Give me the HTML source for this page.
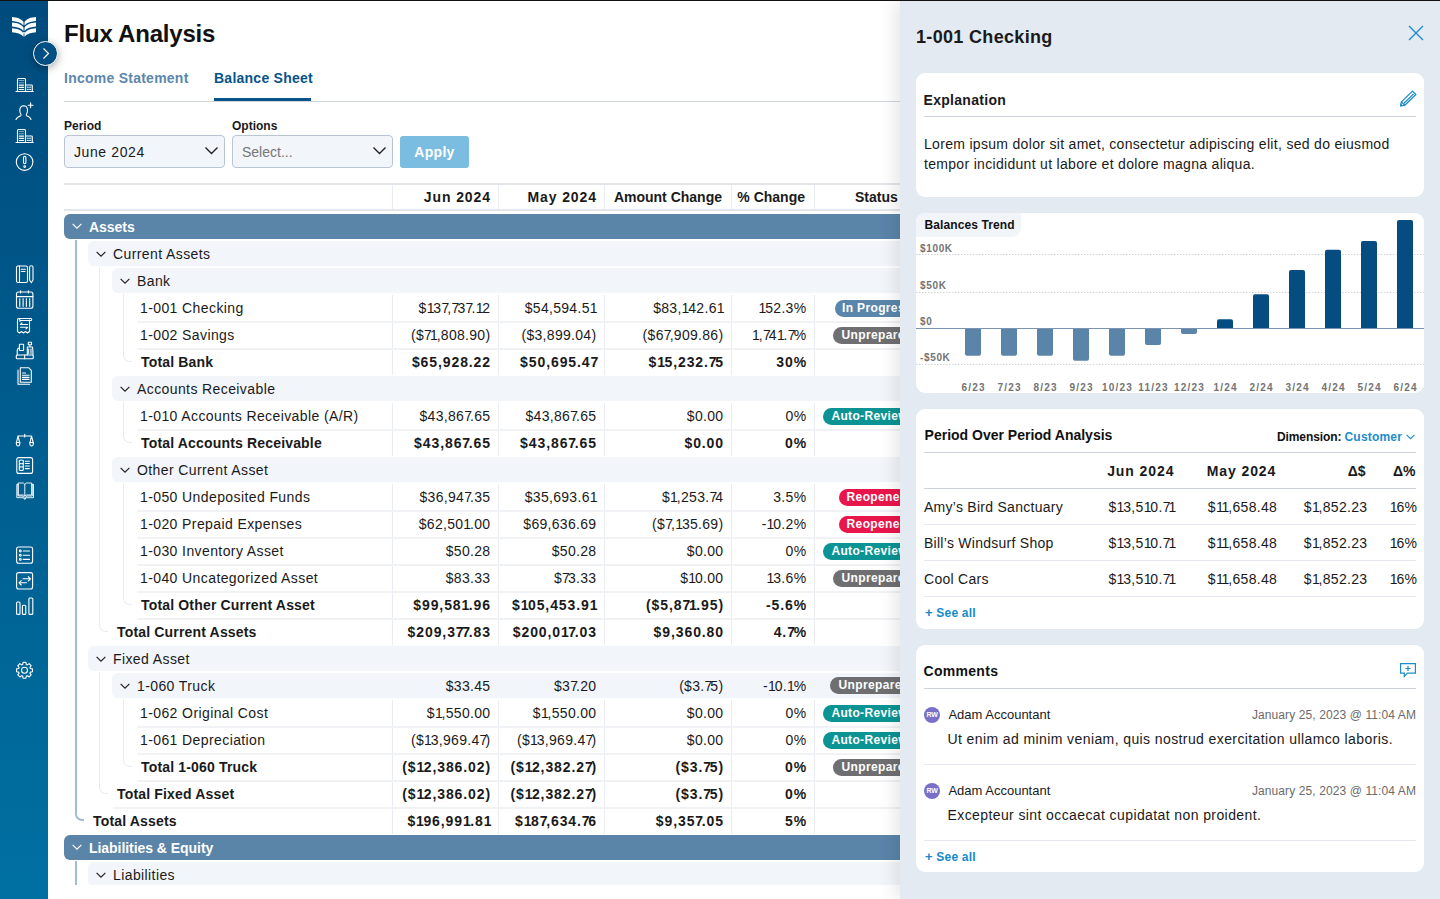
<!DOCTYPE html>
<html><head><meta charset="utf-8">
<style>
*{box-sizing:border-box;margin:0;padding:0}
html,body{width:1440px;height:899px;overflow:hidden;background:#fff;font-family:"Liberation Sans",sans-serif;color:#1a1a1a}
.abs{position:absolute}
#topline{position:absolute;left:0;top:0;width:1440px;height:1px;background:#111;z-index:50}
#side{position:absolute;left:0;top:1px;width:47.5px;height:898px;background:linear-gradient(#004b7d,#0070a2);z-index:5}
#side svg{position:absolute;left:14px;width:20px;height:20px;overflow:visible}
#collapse{position:absolute;left:33px;top:41px;width:25px;height:25px;border-radius:50%;background:#004f82;border:1px solid #fff;box-shadow:0 2px 8px rgba(0,0,0,.35);z-index:6}
h1{position:absolute;left:64px;top:20px;font-size:24px;font-weight:bold;color:#111;letter-spacing:-0.2px}
.tab{position:absolute;top:70px;font-size:14px;font-weight:bold;letter-spacing:0.25px}
#tabline{position:absolute;left:64px;top:101px;width:836px;height:1px;background:#cfd5dd}
#tabul{position:absolute;left:214px;top:98px;width:97px;height:3px;background:#08548a}
.lbl{position:absolute;top:119px;font-size:12px;font-weight:bold;color:#1a1a1a}
.sel{position:absolute;top:135px;width:161px;height:33px;border:1px solid #b9c5d3;border-radius:4px;background:#f2f5fa;font-size:14px;line-height:33px;padding-left:9px}
.sel svg{position:absolute;right:6px;top:11px}
#apply{position:absolute;left:400px;top:135.5px;width:69px;height:32px;border-radius:3px;background:#7bbde0;color:#fff;font-size:14px;font-weight:bold;line-height:33px;letter-spacing:0.3px;text-align:center}
/* table */
#tbl{position:absolute;left:0;top:0;width:900px;height:899px;overflow:hidden}
.hl{position:absolute;height:2px;background:#e6eaf0}
.vl{position:absolute;width:1px;background:#e8ecf2}
.row{position:absolute;height:27px;font-size:14px;line-height:27px;white-space:nowrap}
.grp{position:absolute;height:25px;background:#f2f5fa;border-radius:6px 0 0 6px}
.num{position:absolute;text-align:right;font-size:14px;white-space:nowrap}
.b{font-weight:bold}
.lb{letter-spacing:0.4px}.lb.b{letter-spacing:0.17px}.nm{letter-spacing:0.3px}.nm.b{letter-spacing:0.9px}
i{font-style:normal}.nm .d1{letter-spacing:-1.1px}.nm .d7{letter-spacing:-1.9px}.nm.b .d1{letter-spacing:-0.5px}.nm.b .d7{letter-spacing:-1.3px}
#panel .d1{letter-spacing:-1.1px}#panel .d7{letter-spacing:-1.9px}
.badge{position:absolute;height:17px;border-radius:9px;color:#fff;font-size:12px;font-weight:bold;line-height:17px;text-align:center;white-space:nowrap;letter-spacing:0.35px}
/* panel */
#panel{position:absolute;left:900px;top:1px;width:540px;height:898px;background:#e3eaf2;box-shadow:-6px 0 15px rgba(0,0,0,.09);z-index:10}
.card{position:absolute;left:16px;width:508px;background:#fff;border-radius:9px}
.ct{position:absolute;left:8px;font-size:14px;font-weight:bold;color:#111}
.cdiv{position:absolute;left:8px;width:492px;height:1px;background:#cdd1da}
.ldiv{position:absolute;left:8px;width:492px;height:1px;background:#e6eaf0}
.seeall{position:absolute;left:9px;font-size:12px;font-weight:bold;color:#1c8ccc}
</style></head><body>
<div id="topline"></div>
<div id="side"></div>
<!--SIDE--><svg class="abs" style="left:0;top:0;z-index:6" width="48" height="899" viewBox="0 0 48 899"><g fill="none" stroke="#fff" stroke-width="1.1" stroke-linecap="round" stroke-linejoin="round">
</g><g fill="#fff">
<path d="M12 17.0 C17 17.3 21 18.5 23.5 22.0 V25.5 C21 22.3 17 21.3 12 21.0 Z"/>
<path d="M36 17.0 C31 17.3 27 18.5 24.5 22.0 V25.5 C27 22.3 31 21.3 36 21.0 Z"/>
<path d="M12 22.6 C17 22.9 21 24.1 23.5 27.6 V31.1 C21 27.9 17 26.9 12 26.6 Z"/>
<path d="M36 22.6 C31 22.9 27 24.1 24.5 27.6 V31.1 C27 27.9 31 26.9 36 26.6 Z"/>
<path d="M12 28.2 C17 28.5 21 29.7 23.5 33.2 V36.7 C21 33.5 17 32.5 12 32.2 Z"/>
<path d="M36 28.2 C31 28.5 27 29.7 24.5 33.2 V36.7 C27 33.5 31 32.5 36 32.2 Z"/>
<path d="M23.2 32 L24 36 L24.8 32 Z"/>
</g><g fill="none" stroke="#fff" stroke-width="1.1" stroke-linecap="round" stroke-linejoin="round">
<path d="M17.5 91.5 V79.5 Q17.5 78.5 18.5 78.5 H24.5 Q25.5 78.5 25.5 79.5 V91.5 M25.5 85.0 H31.5 Q32.3 85.0 32.3 85.8 V91.5 M16 91.5 H33.3"/>
<path d="M19.3 80.5 H23.6" stroke-opacity="0.5"/>
<path d="M19.3 82.8 H23.6" stroke-opacity="0.5"/>
<path d="M19.3 85.1 H23.6" stroke-opacity="1"/>
<path d="M19.3 87.4 H23.6" stroke-opacity="1"/>
<path d="M19.3 89.5 H23.6" stroke-opacity="1"/>
<path d="M27.2 87.2 H28.4 M29.6 87.2 H30.8 M27.2 89.4 H28.4 M29.6 89.4 H30.8" stroke-width="1"/>
<path d="M17.5 142.5 V130.5 Q17.5 129.5 18.5 129.5 H24.5 Q25.5 129.5 25.5 130.5 V142.5 M25.5 136.0 H31.5 Q32.3 136.0 32.3 136.8 V142.5 M16 142.5 H33.3"/>
<path d="M19.3 131.5 H23.6" stroke-opacity="0.5"/>
<path d="M19.3 133.8 H23.6" stroke-opacity="0.5"/>
<path d="M19.3 136.1 H23.6" stroke-opacity="1"/>
<path d="M19.3 138.4 H23.6" stroke-opacity="1"/>
<path d="M19.3 140.5 H23.6" stroke-opacity="1"/>
<path d="M27.2 138.2 H28.4 M29.6 138.2 H30.8 M27.2 140.4 H28.4 M29.6 140.4 H30.8" stroke-width="1"/>
<path d="M16 119.5 Q17 116.8 20.8 115.7 Q21.3 115.2 20.8 114.2 Q19.6 112.5 19.8 109.5 Q20.3 105.8 23.7 105.7 Q27.2 105.8 27.5 109.5 Q27.8 112.5 26.5 114.2 Q26 115.2 26.6 115.7 Q30.3 116.8 31 119.5"/>
<path d="M30.6 102.8 V107.6 M28.2 105.2 H33"/>
<circle cx="24.6" cy="162.1" r="8.3"/>
<rect x="23.5" y="156.4" width="2.4" height="7.2" rx="1.2"/>
<circle cx="24.7" cy="166.6" r="0.9"/>
<rect x="16.5" y="266" width="11" height="16.5" rx="1.5"/>
<path d="M19.5 266 V282.5 M21.3 269.3 H25.5 M21.3 271.5 H25"/>
<path d="M29.6 267 Q29.6 265.7 31.3 265.7 Q33 265.7 33 267 V280 L31.3 282.8 L29.6 280 Z"/>
<rect x="16.5" y="292" width="16.4" height="16.2" rx="2"/>
<path d="M16.5 296.6 H32.9 M20.6 290.8 V293 M28.4 290.8 V293"/>
<path d="M19.8 298.8 V306.3" stroke-dasharray="1.2 1" stroke-width="1.2"/>
<path d="M23.1 298.8 V306.3" stroke-dasharray="1.2 1" stroke-width="1.2"/>
<path d="M26.4 298.8 V306.3" stroke-dasharray="1.2 1" stroke-width="1.2"/>
<path d="M29.7 298.8 V306.3" stroke-dasharray="1.2 1" stroke-width="1.2"/>
<path d="M18.5 318.5 Q17.5 318.5 17.5 319.8 V331.5 L19.5 333 L21.5 331.5 L23.5 333 L25.5 331.5 L27.5 333 L29.5 331.5 V320 M18.5 318.5 H31 Q31.7 318.5 31.7 319.5 Q31.7 320.5 30.7 320.5 H20 M18.5 318.5 Q20 318.8 20 320.5 V321.5"/>
<path d="M20.5 324.5 H27.5 M20.5 324.5 L22 323 M20.5 327.3 H27.5 M27.5 327.3 L26 328.8"/>
<rect x="16.3" y="355" width="17" height="3.7" rx="1"/>
<path d="M24.7 355 V358.7 M17.2 355 V351 Q17.2 348.3 19.5 348 M28.3 342.3 H31.5 V344.8 H28.3 Z M29.9 344.8 V347 M27.3 347 H32.5 Q33 350 33 355 M27.3 347 V355"/>
<rect x="19.4" y="344.2" width="4.2" height="6.3" rx="0.5"/>
<path d="M28.7 349 V353.5 M31 349 V353.5" stroke-dasharray="1 0.8"/>
<path d="M18 370 V384.3 H29.6"/>
<path d="M20.3 367.8 H28.8 L31.3 370.3 V382.3 H20.3 Z"/>
<path d="M22.5 373 H25.5 M22.5 375.3 H29 M22.5 377.4 H29 M22.5 379.4 H29"/>
<path d="M24.7 434.2 V437 M17.9 436 H31.5 M17.9 436 L16.5 442.5 M17.9 436 L19.7 442.5 M31.5 436 L30 442.5 M31.5 436 L33.2 442.5"/>
<path d="M16.3 442.5 H19.9 Q19.9 446 18.1 446 Q16.3 446 16.3 442.5 Z M29.8 442.5 H33.4 Q33.4 446 31.6 446 Q29.8 446 29.8 442.5 Z"/>
<rect x="16.8" y="457.6" width="15.8" height="15.8" rx="2"/>
<path d="M19.3 460.5 Q21.3 459.5 23.3 460.5 V470 Q21.3 471 19.3 470 Z M19.3 463.3 Q21.3 464.3 23.3 463.3 M19.3 466.5 Q21.3 467.5 23.3 466.5"/>
<path d="M25.3 461.3 H29.3 M25.3 463.5 H29.3 M25.3 466 H29.3 M25.3 468.6 H29.3"/>
<path d="M18 484.3 V496 H23 L24.8 498.8 L26.6 496 H32.3 V484.3 M18 484.3 H16.8 V497.7 H23.2 L24.8 499.5 L26.4 497.7 H33.5 V484.3 H32.3 M18.6 483 H23.3 L24.8 484.3 L26.3 483 H31.6 V495 H26.3 L24.8 496 L23.3 495 H18.6 Z M24.8 484.3 V496" stroke-width="0.9"/>
<rect x="16.6" y="547" width="16" height="16.2" rx="2"/>
<circle cx="20.3" cy="551" r="0.9"/><circle cx="20.3" cy="555.2" r="0.9"/><circle cx="20.3" cy="559.4" r="0.9"/>
<path d="M23.2 551 H29.5 M23.2 555.2 H29.5 M23.2 559.4 H29.5"/>
<rect x="16.6" y="572.6" width="16" height="16.4" rx="2"/>
<path d="M23 578.8 H30.5 L28.3 576.6 M30.5 578.8 L28.3 581 M26.5 582.8 H19 L21.2 580.6 M19 582.8 L21.2 585"/>
<rect x="16.6" y="602" width="3.4" height="12.4" rx="1"/><rect x="22.4" y="605.3" width="3.4" height="9.1" rx="1"/><rect x="28.9" y="598" width="3.9" height="16.4" rx="1"/>
<path d="M30.33 668.50 L32.47 668.85 L32.47 671.75 L30.33 672.10 L29.90 673.15 L31.16 674.91 L29.11 676.96 L27.35 675.70 L26.30 676.13 L25.95 678.27 L23.05 678.27 L22.70 676.13 L21.65 675.70 L19.89 676.96 L17.84 674.91 L19.10 673.15 L18.67 672.10 L16.53 671.75 L16.53 668.85 L18.67 668.50 L19.10 667.45 L17.84 665.69 L19.89 663.64 L21.65 664.90 L22.70 664.47 L23.05 662.33 L25.95 662.33 L26.30 664.47 L27.35 664.90 L29.11 663.64 L31.16 665.69 L29.90 667.45 Z"/>
<circle cx="24.5" cy="670.3" r="3"/>
</g></svg><!--/SIDE-->
<div id="collapse"><svg width="25" height="25" viewBox="0 0 25 25" style="position:absolute;left:-1px;top:-1px"><path d="M10.5 7.5 L15.5 12.5 L10.5 17.5" fill="none" stroke="#fff" stroke-width="1.2"/></svg></div>

<div id="tbl">
<h1>Flux Analysis</h1>
<div class="tab" style="left:64px;color:#5d87ad">Income Statement</div>
<div class="tab" style="left:214px;color:#08548a">Balance Sheet</div>
<div id="tabline"></div>
<div id="tabul"></div>
<div class="lbl" style="left:64px">Period</div>
<div class="lbl" style="left:232px">Options</div>
<div class="sel" style="left:64px"><span style="letter-spacing:0.6px">June 2024</span><svg width="13" height="8" viewBox="0 0 13 8"><path d="M0.5 0.5 L6.5 6.5 L12.5 0.5" fill="none" stroke="#222" stroke-width="1.4"/></svg></div>
<div class="sel" style="left:232px;color:#777">Select...<svg width="13" height="8" viewBox="0 0 13 8"><path d="M0.5 0.5 L6.5 6.5 L12.5 0.5" fill="none" stroke="#222" stroke-width="1.4"/></svg></div>
<div id="apply">Apply</div>
<!--TABLE--><div class="abs" style="left:0;top:0;width:900px;height:885px;overflow:hidden">
<div class="abs" style="left:64px;top:183px;width:836px;height:2px;background:#e2e5e9"></div>
<div class="abs" style="left:64px;top:209px;width:836px;height:2px;background:#e2e5e9"></div>
<div class="abs" style="left:391.5px;top:185px;width:1px;height:24px;background:#e9edf3"></div>
<div class="abs" style="left:497.5px;top:185px;width:1px;height:24px;background:#e9edf3"></div>
<div class="abs" style="left:603.5px;top:185px;width:1px;height:24px;background:#e9edf3"></div>
<div class="abs" style="left:731px;top:185px;width:1px;height:24px;background:#e9edf3"></div>
<div class="abs" style="left:814px;top:185px;width:1px;height:24px;background:#e9edf3"></div>
<div class="abs" style="left:391.5px;top:295.4px;width:1px;height:79.6px;background:#e9edf3"></div>
<div class="abs" style="left:497.5px;top:295.4px;width:1px;height:79.6px;background:#e9edf3"></div>
<div class="abs" style="left:603.5px;top:295.4px;width:1px;height:79.6px;background:#e9edf3"></div>
<div class="abs" style="left:731px;top:295.4px;width:1px;height:79.6px;background:#e9edf3"></div>
<div class="abs" style="left:814px;top:295.4px;width:1px;height:79.6px;background:#e9edf3"></div>
<div class="abs" style="left:391.5px;top:403.4px;width:1px;height:52.6px;background:#e9edf3"></div>
<div class="abs" style="left:497.5px;top:403.4px;width:1px;height:52.6px;background:#e9edf3"></div>
<div class="abs" style="left:603.5px;top:403.4px;width:1px;height:52.6px;background:#e9edf3"></div>
<div class="abs" style="left:731px;top:403.4px;width:1px;height:52.6px;background:#e9edf3"></div>
<div class="abs" style="left:814px;top:403.4px;width:1px;height:52.6px;background:#e9edf3"></div>
<div class="abs" style="left:391.5px;top:484.4px;width:1px;height:160.6px;background:#e9edf3"></div>
<div class="abs" style="left:497.5px;top:484.4px;width:1px;height:160.6px;background:#e9edf3"></div>
<div class="abs" style="left:603.5px;top:484.4px;width:1px;height:160.6px;background:#e9edf3"></div>
<div class="abs" style="left:731px;top:484.4px;width:1px;height:160.6px;background:#e9edf3"></div>
<div class="abs" style="left:814px;top:484.4px;width:1px;height:160.6px;background:#e9edf3"></div>
<div class="abs" style="left:391.5px;top:700.4px;width:1px;height:133.6px;background:#e9edf3"></div>
<div class="abs" style="left:497.5px;top:700.4px;width:1px;height:133.6px;background:#e9edf3"></div>
<div class="abs" style="left:603.5px;top:700.4px;width:1px;height:133.6px;background:#e9edf3"></div>
<div class="abs" style="left:731px;top:700.4px;width:1px;height:133.6px;background:#e9edf3"></div>
<div class="abs" style="left:814px;top:700.4px;width:1px;height:133.6px;background:#e9edf3"></div>
<div class="abs" style="left:137px;top:321px;width:763px;height:2px;background:#f0f2f6"></div>
<div class="abs" style="left:137px;top:348px;width:763px;height:2px;background:#f0f2f6"></div>
<div class="abs" style="left:137px;top:429px;width:763px;height:2px;background:#f0f2f6"></div>
<div class="abs" style="left:137px;top:510px;width:763px;height:2px;background:#f0f2f6"></div>
<div class="abs" style="left:137px;top:537px;width:763px;height:2px;background:#f0f2f6"></div>
<div class="abs" style="left:137px;top:564px;width:763px;height:2px;background:#f0f2f6"></div>
<div class="abs" style="left:137px;top:591px;width:763px;height:2px;background:#f0f2f6"></div>
<div class="abs" style="left:137px;top:618px;width:763px;height:2px;background:#f0f2f6"></div>
<div class="abs" style="left:137px;top:726px;width:763px;height:2px;background:#f0f2f6"></div>
<div class="abs" style="left:137px;top:753px;width:763px;height:2px;background:#f0f2f6"></div>
<div class="abs" style="left:137px;top:780px;width:763px;height:2px;background:#f0f2f6"></div>
<div class="abs" style="left:113px;top:807px;width:787px;height:2px;background:#f0f2f6"></div>
<div class="abs" style="left:75px;top:240px;width:9px;height:580.5px;border-left:2px solid #a2bcd3;border-bottom:2px solid #a2bcd3;border-bottom-left-radius:7px"></div>
<div class="abs" style="left:99px;top:267px;width:9px;height:364.5px;border-left:1px solid #e6ebf2;border-bottom:1px solid #e6ebf2;border-bottom-left-radius:7px"></div>
<div class="abs" style="left:123px;top:294px;width:9px;height:67.5px;border-left:1px solid #e6ebf2;border-bottom:1px solid #e6ebf2;border-bottom-left-radius:7px"></div>
<div class="abs" style="left:123px;top:402px;width:9px;height:40.5px;border-left:1px solid #e6ebf2;border-bottom:1px solid #e6ebf2;border-bottom-left-radius:7px"></div>
<div class="abs" style="left:123px;top:483px;width:9px;height:121.5px;border-left:1px solid #e6ebf2;border-bottom:1px solid #e6ebf2;border-bottom-left-radius:7px"></div>
<div class="abs" style="left:99px;top:672px;width:9px;height:121.5px;border-left:1px solid #e6ebf2;border-bottom:1px solid #e6ebf2;border-bottom-left-radius:7px"></div>
<div class="abs" style="left:123px;top:699px;width:9px;height:67.5px;border-left:1px solid #e6ebf2;border-bottom:1px solid #e6ebf2;border-bottom-left-radius:7px"></div>
<div class="abs" style="left:75px;top:861px;width:2px;height:24px;background:#a2bcd3"></div>
<div class="abs" style="left:99px;top:888px;width:1px;height:10px;background:#e6ebf2"></div>
<div class="row b nm" style="right:409.1px;top:184px;text-align:right">Jun 2024</div>
<div class="row b nm" style="right:303.1px;top:184px;text-align:right">May 2024</div>
<div class="row b" style="right:178px;top:184px;text-align:right">Amount Change</div>
<div class="row b" style="right:95px;top:184px;text-align:right">% Change</div>
<div class="row b" style="left:855px;top:184px">Status</div>
<div class="abs" style="left:64px;top:214.3px;width:900px;height:25px;background:#5a84a8;border-radius:6px 0 0 6px"></div>
<svg class="abs" style="left:71.6px;top:222.5px" width="10" height="7" viewBox="0 0 10 7"><path d="M0.6 0.8 L5 5.2 L9.4 0.8" fill="none" stroke="#fff" stroke-width="1.1"/></svg>
<div class="row b" style="left:89px;top:214px;color:#fff;letter-spacing:-0.05px">Assets</div>
<div class="grp" style="left:88px;top:241.4px;width:812px"></div>
<svg class="abs" style="left:95.6px;top:250.5px" width="10" height="7" viewBox="0 0 10 7"><path d="M0.6 0.8 L5 5.2 L9.4 0.8" fill="none" stroke="#222" stroke-width="1.2"/></svg>
<div class="row lb" style="left:113px;top:241px">Current Assets</div>
<div class="grp" style="left:112px;top:268.4px;width:788px"></div>
<svg class="abs" style="left:119.6px;top:277.5px" width="10" height="7" viewBox="0 0 10 7"><path d="M0.6 0.8 L5 5.2 L9.4 0.8" fill="none" stroke="#222" stroke-width="1.2"/></svg>
<div class="row lb" style="left:137px;top:268px">Bank</div>
<div class="row lb" style="left:140px;top:295px">1-001 Checking</div>
<div class="row nm" style="right:409.6px;top:295px;text-align:right">$<i class="d1">1</i>3<i class="d7">7</i>,<i class="d7">7</i>3<i class="d7">7</i>.<i class="d1">1</i>2</div>
<div class="row nm" style="right:303.6px;top:295px;text-align:right">$54,594.5<i class="d1">1</i></div>
<div class="row nm" style="right:176.6px;top:295px;text-align:right">$83,<i class="d1">1</i>42.6<i class="d1">1</i></div>
<div class="row nm" style="right:93.6px;top:295px;text-align:right"><i class="d1">1</i>52.3%</div>
<div class="badge" style="left:834.5px;top:300.2px;width:85px;background:#5a86ab">In Progress</div>
<div class="row lb" style="left:140px;top:322px">1-002 Savings</div>
<div class="row nm" style="right:409.6px;top:322px;text-align:right">($<i class="d7">7</i><i class="d1">1</i>,808.90)</div>
<div class="row nm" style="right:303.6px;top:322px;text-align:right">($3,899.04)</div>
<div class="row nm" style="right:176.6px;top:322px;text-align:right">($6<i class="d7">7</i>,909.86)</div>
<div class="row nm" style="right:93.6px;top:322px;text-align:right"><i class="d1">1</i>,<i class="d7">7</i>4<i class="d1">1</i>.<i class="d7">7</i>%</div>
<div class="badge" style="left:833.0px;top:327.2px;width:88px;background:#6f6f71">Unprepared</div>
<div class="row lb b" style="left:141px;top:349px">Total Bank</div>
<div class="row nm b" style="right:409.0px;top:349px;text-align:right">$65,928.22</div>
<div class="row nm b" style="right:303.0px;top:349px;text-align:right">$50,695.4<i class="d7">7</i></div>
<div class="row nm b" style="right:176.0px;top:349px;text-align:right">$<i class="d1">1</i>5,232.<i class="d7">7</i>5</div>
<div class="row nm b" style="right:93.0px;top:349px;text-align:right">30%</div>
<div class="grp" style="left:112px;top:376.4px;width:788px"></div>
<svg class="abs" style="left:119.6px;top:385.5px" width="10" height="7" viewBox="0 0 10 7"><path d="M0.6 0.8 L5 5.2 L9.4 0.8" fill="none" stroke="#222" stroke-width="1.2"/></svg>
<div class="row lb" style="left:137px;top:376px">Accounts Receivable</div>
<div class="row lb" style="left:140px;top:403px">1-010 Accounts Receivable (A/R)</div>
<div class="row nm" style="right:409.6px;top:403px;text-align:right">$43,86<i class="d7">7</i>.65</div>
<div class="row nm" style="right:303.6px;top:403px;text-align:right">$43,86<i class="d7">7</i>.65</div>
<div class="row nm" style="right:176.6px;top:403px;text-align:right">$0.00</div>
<div class="row nm" style="right:93.6px;top:403px;text-align:right">0%</div>
<div class="badge" style="left:823.0px;top:408.2px;width:108px;background:#0b9493">Auto-Reviewed</div>
<div class="row lb b" style="left:141px;top:430px">Total Accounts Receivable</div>
<div class="row nm b" style="right:409.0px;top:430px;text-align:right">$43,86<i class="d7">7</i>.65</div>
<div class="row nm b" style="right:303.0px;top:430px;text-align:right">$43,86<i class="d7">7</i>.65</div>
<div class="row nm b" style="right:176.0px;top:430px;text-align:right">$0.00</div>
<div class="row nm b" style="right:93.0px;top:430px;text-align:right">0%</div>
<div class="grp" style="left:112px;top:457.4px;width:788px"></div>
<svg class="abs" style="left:119.6px;top:466.5px" width="10" height="7" viewBox="0 0 10 7"><path d="M0.6 0.8 L5 5.2 L9.4 0.8" fill="none" stroke="#222" stroke-width="1.2"/></svg>
<div class="row lb" style="left:137px;top:457px">Other Current Asset</div>
<div class="row lb" style="left:140px;top:484px">1-050 Undeposited Funds</div>
<div class="row nm" style="right:409.6px;top:484px;text-align:right">$36,94<i class="d7">7</i>.35</div>
<div class="row nm" style="right:303.6px;top:484px;text-align:right">$35,693.6<i class="d1">1</i></div>
<div class="row nm" style="right:176.6px;top:484px;text-align:right">$<i class="d1">1</i>,253.<i class="d7">7</i>4</div>
<div class="row nm" style="right:93.6px;top:484px;text-align:right">3.5%</div>
<div class="badge" style="left:838.5px;top:489.2px;width:77px;background:#e9164b">Reopened</div>
<div class="row lb" style="left:140px;top:511px">1-020 Prepaid Expenses</div>
<div class="row nm" style="right:409.6px;top:511px;text-align:right">$62,50<i class="d1">1</i>.00</div>
<div class="row nm" style="right:303.6px;top:511px;text-align:right">$69,636.69</div>
<div class="row nm" style="right:176.6px;top:511px;text-align:right">($<i class="d7">7</i>,<i class="d1">1</i>35.69)</div>
<div class="row nm" style="right:93.6px;top:511px;text-align:right">-<i class="d1">1</i>0.2%</div>
<div class="badge" style="left:838.5px;top:516.2px;width:77px;background:#e9164b">Reopened</div>
<div class="row lb" style="left:140px;top:538px">1-030 Inventory Asset</div>
<div class="row nm" style="right:409.6px;top:538px;text-align:right">$50.28</div>
<div class="row nm" style="right:303.6px;top:538px;text-align:right">$50.28</div>
<div class="row nm" style="right:176.6px;top:538px;text-align:right">$0.00</div>
<div class="row nm" style="right:93.6px;top:538px;text-align:right">0%</div>
<div class="badge" style="left:823.0px;top:543.2px;width:108px;background:#0b9493">Auto-Reviewed</div>
<div class="row lb" style="left:140px;top:565px">1-040 Uncategorized Asset</div>
<div class="row nm" style="right:409.6px;top:565px;text-align:right">$83.33</div>
<div class="row nm" style="right:303.6px;top:565px;text-align:right">$<i class="d7">7</i>3.33</div>
<div class="row nm" style="right:176.6px;top:565px;text-align:right">$<i class="d1">1</i>0.00</div>
<div class="row nm" style="right:93.6px;top:565px;text-align:right"><i class="d1">1</i>3.6%</div>
<div class="badge" style="left:833.0px;top:570.2px;width:88px;background:#6f6f71">Unprepared</div>
<div class="row lb b" style="left:141px;top:592px">Total Other Current Asset</div>
<div class="row nm b" style="right:409.0px;top:592px;text-align:right">$99,58<i class="d1">1</i>.96</div>
<div class="row nm b" style="right:303.0px;top:592px;text-align:right">$<i class="d1">1</i>05,453.9<i class="d1">1</i></div>
<div class="row nm b" style="right:176.0px;top:592px;text-align:right">($5,8<i class="d7">7</i><i class="d1">1</i>.95)</div>
<div class="row nm b" style="right:93.0px;top:592px;text-align:right">-5.6%</div>
<div class="row lb b" style="left:117px;top:619px">Total Current Assets</div>
<div class="row nm b" style="right:409.0px;top:619px;text-align:right">$209,3<i class="d7">7</i><i class="d7">7</i>.83</div>
<div class="row nm b" style="right:303.0px;top:619px;text-align:right">$200,0<i class="d1">1</i><i class="d7">7</i>.03</div>
<div class="row nm b" style="right:176.0px;top:619px;text-align:right">$9,360.80</div>
<div class="row nm b" style="right:93.0px;top:619px;text-align:right">4.<i class="d7">7</i>%</div>
<div class="grp" style="left:88px;top:646.4px;width:812px"></div>
<svg class="abs" style="left:95.6px;top:655.5px" width="10" height="7" viewBox="0 0 10 7"><path d="M0.6 0.8 L5 5.2 L9.4 0.8" fill="none" stroke="#222" stroke-width="1.2"/></svg>
<div class="row lb" style="left:113px;top:646px">Fixed Asset</div>
<div class="grp" style="left:112px;top:673.4px;width:788px"></div>
<svg class="abs" style="left:119.6px;top:682.5px" width="10" height="7" viewBox="0 0 10 7"><path d="M0.6 0.8 L5 5.2 L9.4 0.8" fill="none" stroke="#222" stroke-width="1.2"/></svg>
<div class="row lb" style="left:137px;top:673px">1-060 Truck</div>
<div class="row nm" style="right:409.6px;top:673px;text-align:right">$33.45</div>
<div class="row nm" style="right:303.6px;top:673px;text-align:right">$3<i class="d7">7</i>.20</div>
<div class="row nm" style="right:176.6px;top:673px;text-align:right">($3.<i class="d7">7</i>5)</div>
<div class="row nm" style="right:93.6px;top:673px;text-align:right">-<i class="d1">1</i>0.<i class="d1">1</i>%</div>
<div class="badge" style="left:830.0px;top:677.4px;width:88px;background:#6f6f71">Unprepared</div>
<div class="row lb" style="left:140px;top:700px">1-062 Original Cost</div>
<div class="row nm" style="right:409.6px;top:700px;text-align:right">$<i class="d1">1</i>,550.00</div>
<div class="row nm" style="right:303.6px;top:700px;text-align:right">$<i class="d1">1</i>,550.00</div>
<div class="row nm" style="right:176.6px;top:700px;text-align:right">$0.00</div>
<div class="row nm" style="right:93.6px;top:700px;text-align:right">0%</div>
<div class="badge" style="left:823.0px;top:705.2px;width:108px;background:#0b9493">Auto-Reviewed</div>
<div class="row lb" style="left:140px;top:727px">1-061 Depreciation</div>
<div class="row nm" style="right:409.6px;top:727px;text-align:right">($<i class="d1">1</i>3,969.4<i class="d7">7</i>)</div>
<div class="row nm" style="right:303.6px;top:727px;text-align:right">($<i class="d1">1</i>3,969.4<i class="d7">7</i>)</div>
<div class="row nm" style="right:176.6px;top:727px;text-align:right">$0.00</div>
<div class="row nm" style="right:93.6px;top:727px;text-align:right">0%</div>
<div class="badge" style="left:823.0px;top:732.2px;width:108px;background:#0b9493">Auto-Reviewed</div>
<div class="row lb b" style="left:141px;top:754px">Total 1-060 Truck</div>
<div class="row nm b" style="right:409.0px;top:754px;text-align:right">($<i class="d1">1</i>2,386.02)</div>
<div class="row nm b" style="right:303.0px;top:754px;text-align:right">($<i class="d1">1</i>2,382.2<i class="d7">7</i>)</div>
<div class="row nm b" style="right:176.0px;top:754px;text-align:right">($3.<i class="d7">7</i>5)</div>
<div class="row nm b" style="right:93.0px;top:754px;text-align:right">0%</div>
<div class="badge" style="left:833.0px;top:759.2px;width:88px;background:#6f6f71">Unprepared</div>
<div class="row lb b" style="left:117px;top:781px">Total Fixed Asset</div>
<div class="row nm b" style="right:409.0px;top:781px;text-align:right">($<i class="d1">1</i>2,386.02)</div>
<div class="row nm b" style="right:303.0px;top:781px;text-align:right">($<i class="d1">1</i>2,382.2<i class="d7">7</i>)</div>
<div class="row nm b" style="right:176.0px;top:781px;text-align:right">($3.<i class="d7">7</i>5)</div>
<div class="row nm b" style="right:93.0px;top:781px;text-align:right">0%</div>
<div class="row lb b" style="left:93px;top:808px">Total Assets</div>
<div class="row nm b" style="right:409.0px;top:808px;text-align:right">$<i class="d1">1</i>96,99<i class="d1">1</i>.8<i class="d1">1</i></div>
<div class="row nm b" style="right:303.0px;top:808px;text-align:right">$<i class="d1">1</i>8<i class="d7">7</i>,634.<i class="d7">7</i>6</div>
<div class="row nm b" style="right:176.0px;top:808px;text-align:right">$9,35<i class="d7">7</i>.05</div>
<div class="row nm b" style="right:93.0px;top:808px;text-align:right">5%</div>
<div class="abs" style="left:64px;top:835.3px;width:900px;height:25px;background:#5a84a8;border-radius:6px 0 0 6px"></div>
<svg class="abs" style="left:71.6px;top:843.5px" width="10" height="7" viewBox="0 0 10 7"><path d="M0.6 0.8 L5 5.2 L9.4 0.8" fill="none" stroke="#fff" stroke-width="1.1"/></svg>
<div class="row b" style="left:89px;top:835px;color:#fff;letter-spacing:-0.05px">Liabilities & Equity</div>
<div class="grp" style="left:88px;top:862.4px;width:812px"></div>
<svg class="abs" style="left:95.6px;top:871.5px" width="10" height="7" viewBox="0 0 10 7"><path d="M0.6 0.8 L5 5.2 L9.4 0.8" fill="none" stroke="#222" stroke-width="1.2"/></svg>
<div class="row lb" style="left:113px;top:862px">Liabilities</div>
</div><!--/TABLE-->

</div>

<div id="panel">
<!--PANEL--><div class="abs" style="top:24.46px;font-size:18px;line-height:25px;left:16.00px;font-weight:bold;color:#1a1a1a;letter-spacing:0.33px;white-space:nowrap">1-001 Checking</div>
<svg class="abs" style="left:508px;top:24px" width="16" height="16" viewBox="0 0 16 16"><path d="M1 1 L15 15 M15 1 L1 15" stroke="#1c8ccc" stroke-width="1.4" fill="none"/></svg>
<div class="abs" style="left:16px;top:72px;width:508px;height:124px;background:#fff;border-radius:9px"></div>
<div class="abs" style="left:16px;top:212px;width:508px;height:180px;background:#fff;border-radius:9px"></div>
<div class="abs" style="left:16px;top:408px;width:508px;height:220px;background:#fff;border-radius:9px"></div>
<div class="abs" style="left:16px;top:644px;width:508px;height:227px;background:#fff;border-radius:9px"></div>
<div class="abs" style="top:89.35px;font-size:14px;line-height:20px;left:23.50px;font-weight:bold;color:#1a1a1a;letter-spacing:0.3px;white-space:nowrap">Explanation</div>
<div class="abs" style="left:24px;top:115px;width:492px;height:1px;background:#cdd1da"></div>
<svg class="abs" style="left:499px;top:89px" width="18" height="18" viewBox="0 0 18 18"><g fill="none" stroke="#1a8ccc" stroke-width="1.25" stroke-linejoin="round"><path d="M1.5 16 L2.4 11.9 L13.5 1.1 L16.9 4.5 L5.8 15.3 Z"/><path d="M2.4 11.9 L5.8 15.3 M5 13.3 L14.6 3.9" /></g><path d="M1.2 16.3 L1.8 13.6 L4 15.7 Z" fill="#1a8ccc"/></svg>
<div class="abs" style="top:132.85px;font-size:14px;line-height:20px;left:24.00px;color:#1a1a1a;letter-spacing:0.31px;white-space:nowrap">Lorem ipsum dolor sit amet, consectetur adipiscing elit, sed do eiusmod</div>
<div class="abs" style="top:152.85px;font-size:14px;line-height:20px;left:24.00px;color:#1a1a1a;letter-spacing:0.31px;white-space:nowrap">tempor incididunt ut labore et dolore magna aliqua.</div>
<div class="abs" style="left:16px;top:212px;width:105px;height:24px;background:#f1f4f9;border-radius:9px 0 9px 0"></div>
<div class="abs" style="top:216.04px;font-size:12px;line-height:17px;left:24.50px;font-weight:bold;color:#111;letter-spacing:0.1px;white-space:nowrap">Balances Trend</div>
<svg class="abs" style="left:0;top:0" width="540" height="898" viewBox="900 1 540 898">
<line x1="916" y1="254.5" x2="1424" y2="254.5" stroke="#cfd3d9" stroke-width="1" stroke-dasharray="1.5 1.5"/>
<line x1="916" y1="292.5" x2="1424" y2="292.5" stroke="#cfd3d9" stroke-width="1" stroke-dasharray="1.5 1.5"/>
<line x1="916" y1="364.5" x2="1424" y2="364.5" stroke="#cfd3d9" stroke-width="1" stroke-dasharray="1.5 1.5"/>
<path d="M965 328 V353.8 Q965 355.8 967 355.8 H979 Q981 355.8 981 353.8 V328 Z" fill="#5a84a8"/>
<path d="M1001 328 V353.8 Q1001 355.8 1003 355.8 H1015 Q1017 355.8 1017 353.8 V328 Z" fill="#5a84a8"/>
<path d="M1037 328 V353.8 Q1037 355.8 1039 355.8 H1051 Q1053 355.8 1053 353.8 V328 Z" fill="#5a84a8"/>
<path d="M1073 328 V358.7 Q1073 360.7 1075 360.7 H1087 Q1089 360.7 1089 358.7 V328 Z" fill="#5a84a8"/>
<path d="M1109 328 V353.8 Q1109 355.8 1111 355.8 H1123 Q1125 355.8 1125 353.8 V328 Z" fill="#5a84a8"/>
<path d="M1145 328 V342.9 Q1145 344.9 1147 344.9 H1159 Q1161 344.9 1161 342.9 V328 Z" fill="#5a84a8"/>
<path d="M1181 328 V331.9 Q1181 333.9 1183 333.9 H1195 Q1197 333.9 1197 331.9 V328 Z" fill="#5a84a8"/>
<path d="M1217 329 V321.2 Q1217 319.2 1219 319.2 H1231 Q1233 319.2 1233 321.2 V329 Z" fill="#074c80"/>
<path d="M1253 329 V296.2 Q1253 294.2 1255 294.2 H1267 Q1269 294.2 1269 296.2 V329 Z" fill="#074c80"/>
<path d="M1289 329 V271.9 Q1289 269.9 1291 269.9 H1303 Q1305 269.9 1305 271.9 V329 Z" fill="#074c80"/>
<path d="M1325 329 V251.8 Q1325 249.8 1327 249.8 H1339 Q1341 249.8 1341 251.8 V329 Z" fill="#074c80"/>
<path d="M1361 329 V242.9 Q1361 240.9 1363 240.9 H1375 Q1377 240.9 1377 242.9 V329 Z" fill="#074c80"/>
<path d="M1397 329 V222.0 Q1397 220.0 1399 220.0 H1411 Q1413 220.0 1413 222.0 V329 Z" fill="#074c80"/>
<line x1="916" y1="328.5" x2="1424" y2="328.5" stroke="#7b93b0" stroke-width="1.2"/>
</svg>
<div class="abs" style="top:241.43px;font-size:10px;line-height:14px;left:20.00px;font-weight:bold;color:#737373;letter-spacing:0.65px;white-space:nowrap">$100K</div>
<div class="abs" style="top:278.44px;font-size:10px;line-height:14px;left:20.00px;font-weight:bold;color:#737373;letter-spacing:0.65px;white-space:nowrap">$50K</div>
<div class="abs" style="top:314.44px;font-size:10px;line-height:14px;left:20.00px;font-weight:bold;color:#737373;letter-spacing:0.65px;white-space:nowrap">$0</div>
<div class="abs" style="top:350.44px;font-size:10px;line-height:14px;left:20.00px;font-weight:bold;color:#737373;letter-spacing:0.65px;white-space:nowrap">-$50K</div>
<div class="abs" style="top:379.74px;font-size:10px;line-height:14px;left:-26.40px;width:200px;text-align:center;font-weight:bold;color:#737373;letter-spacing:1.2px;white-space:nowrap">6/23</div>
<div class="abs" style="top:379.74px;font-size:10px;line-height:14px;left:9.60px;width:200px;text-align:center;font-weight:bold;color:#737373;letter-spacing:1.2px;white-space:nowrap">7/23</div>
<div class="abs" style="top:379.74px;font-size:10px;line-height:14px;left:45.60px;width:200px;text-align:center;font-weight:bold;color:#737373;letter-spacing:1.2px;white-space:nowrap">8/23</div>
<div class="abs" style="top:379.74px;font-size:10px;line-height:14px;left:81.60px;width:200px;text-align:center;font-weight:bold;color:#737373;letter-spacing:1.2px;white-space:nowrap">9/23</div>
<div class="abs" style="top:379.74px;font-size:10px;line-height:14px;left:117.60px;width:200px;text-align:center;font-weight:bold;color:#737373;letter-spacing:1.2px;white-space:nowrap">10/23</div>
<div class="abs" style="top:379.74px;font-size:10px;line-height:14px;left:153.60px;width:200px;text-align:center;font-weight:bold;color:#737373;letter-spacing:1.2px;white-space:nowrap">11/23</div>
<div class="abs" style="top:379.74px;font-size:10px;line-height:14px;left:189.60px;width:200px;text-align:center;font-weight:bold;color:#737373;letter-spacing:1.2px;white-space:nowrap">12/23</div>
<div class="abs" style="top:379.74px;font-size:10px;line-height:14px;left:225.60px;width:200px;text-align:center;font-weight:bold;color:#737373;letter-spacing:1.2px;white-space:nowrap">1/24</div>
<div class="abs" style="top:379.74px;font-size:10px;line-height:14px;left:261.60px;width:200px;text-align:center;font-weight:bold;color:#737373;letter-spacing:1.2px;white-space:nowrap">2/24</div>
<div class="abs" style="top:379.74px;font-size:10px;line-height:14px;left:297.60px;width:200px;text-align:center;font-weight:bold;color:#737373;letter-spacing:1.2px;white-space:nowrap">3/24</div>
<div class="abs" style="top:379.74px;font-size:10px;line-height:14px;left:333.60px;width:200px;text-align:center;font-weight:bold;color:#737373;letter-spacing:1.2px;white-space:nowrap">4/24</div>
<div class="abs" style="top:379.74px;font-size:10px;line-height:14px;left:369.60px;width:200px;text-align:center;font-weight:bold;color:#737373;letter-spacing:1.2px;white-space:nowrap">5/24</div>
<div class="abs" style="top:379.74px;font-size:10px;line-height:14px;left:405.60px;width:200px;text-align:center;font-weight:bold;color:#737373;letter-spacing:1.2px;white-space:nowrap">6/24</div>
<div class="abs" style="top:423.85px;font-size:14px;line-height:20px;left:24.60px;font-weight:bold;color:#111;white-space:nowrap">Period Over Period Analysis</div>
<div class="abs" style="top:428.44px;font-size:12px;line-height:17px;left:377.00px;font-weight:bold;color:#111;letter-spacing:-0.1px;white-space:nowrap">Dimension:</div>
<div class="abs" style="top:428.44px;font-size:12px;line-height:17px;left:444.50px;color:#1c8ccc;font-weight:bold;letter-spacing:0.2px;white-space:nowrap">Customer</div>
<svg class="abs" style="left:506px;top:433px" width="9" height="6" viewBox="0 0 9 6"><path d="M0.6 0.8 L4.5 4.7 L8.4 0.8" fill="none" stroke="#1c8ccc" stroke-width="1.1"/></svg>
<div class="abs" style="left:24px;top:451px;width:492px;height:1px;background:#cdd1da"></div>
<div class="abs" style="top:459.85px;font-size:14px;line-height:20px;right:265.70px;font-weight:bold;color:#1a1a1a;letter-spacing:0.9px;white-space:nowrap">Jun 2024</div>
<div class="abs" style="top:459.85px;font-size:14px;line-height:20px;right:163.80px;font-weight:bold;color:#1a1a1a;letter-spacing:0.9px;white-space:nowrap">May 2024</div>
<div class="abs" style="top:459.85px;font-size:14px;line-height:20px;right:74.40px;font-weight:bold;color:#1a1a1a;white-space:nowrap">Δ$</div>
<div class="abs" style="top:459.85px;font-size:14px;line-height:20px;right:24.50px;font-weight:bold;color:#1a1a1a;white-space:nowrap">Δ%</div>
<div class="abs" style="left:24px;top:487px;width:492px;height:1px;background:#cdd1da"></div>
<div class="abs" style="top:495.85px;font-size:14px;line-height:20px;left:24.00px;color:#1a1a1a;letter-spacing:0.27px;white-space:nowrap">Amy’s Bird Sanctuary</div>
<div class="abs" style="top:495.85px;font-size:14px;line-height:20px;right:264.80px;color:#1a1a1a;letter-spacing:0.3px;white-space:nowrap">$<i class="d1">1</i>3,5<i class="d1">1</i>0.<i class="d7">7</i><i class="d1">1</i></div>
<div class="abs" style="top:495.85px;font-size:14px;line-height:20px;right:162.90px;color:#1a1a1a;letter-spacing:0.3px;white-space:nowrap">$<i class="d1">1</i><i class="d1">1</i>,658.48</div>
<div class="abs" style="top:495.85px;font-size:14px;line-height:20px;right:72.60px;color:#1a1a1a;letter-spacing:0.3px;white-space:nowrap">$<i class="d1">1</i>,852.23</div>
<div class="abs" style="top:495.85px;font-size:14px;line-height:20px;right:22.70px;color:#1a1a1a;letter-spacing:0.3px;white-space:nowrap"><i class="d1">1</i>6%</div>
<div class="abs" style="left:24px;top:523px;width:492px;height:1px;background:#e6eaf0"></div>
<div class="abs" style="top:531.85px;font-size:14px;line-height:20px;left:24.00px;color:#1a1a1a;letter-spacing:0.27px;white-space:nowrap">Bill’s Windsurf Shop</div>
<div class="abs" style="top:531.85px;font-size:14px;line-height:20px;right:264.80px;color:#1a1a1a;letter-spacing:0.3px;white-space:nowrap">$<i class="d1">1</i>3,5<i class="d1">1</i>0.<i class="d7">7</i><i class="d1">1</i></div>
<div class="abs" style="top:531.85px;font-size:14px;line-height:20px;right:162.90px;color:#1a1a1a;letter-spacing:0.3px;white-space:nowrap">$<i class="d1">1</i><i class="d1">1</i>,658.48</div>
<div class="abs" style="top:531.85px;font-size:14px;line-height:20px;right:72.60px;color:#1a1a1a;letter-spacing:0.3px;white-space:nowrap">$<i class="d1">1</i>,852.23</div>
<div class="abs" style="top:531.85px;font-size:14px;line-height:20px;right:22.70px;color:#1a1a1a;letter-spacing:0.3px;white-space:nowrap"><i class="d1">1</i>6%</div>
<div class="abs" style="left:24px;top:559px;width:492px;height:1px;background:#e6eaf0"></div>
<div class="abs" style="top:567.85px;font-size:14px;line-height:20px;left:24.00px;color:#1a1a1a;letter-spacing:0.27px;white-space:nowrap">Cool Cars</div>
<div class="abs" style="top:567.85px;font-size:14px;line-height:20px;right:264.80px;color:#1a1a1a;letter-spacing:0.3px;white-space:nowrap">$<i class="d1">1</i>3,5<i class="d1">1</i>0.<i class="d7">7</i><i class="d1">1</i></div>
<div class="abs" style="top:567.85px;font-size:14px;line-height:20px;right:162.90px;color:#1a1a1a;letter-spacing:0.3px;white-space:nowrap">$<i class="d1">1</i><i class="d1">1</i>,658.48</div>
<div class="abs" style="top:567.85px;font-size:14px;line-height:20px;right:72.60px;color:#1a1a1a;letter-spacing:0.3px;white-space:nowrap">$<i class="d1">1</i>,852.23</div>
<div class="abs" style="top:567.85px;font-size:14px;line-height:20px;right:22.70px;color:#1a1a1a;letter-spacing:0.3px;white-space:nowrap"><i class="d1">1</i>6%</div>
<div class="abs" style="left:24px;top:595px;width:492px;height:1px;background:#e6eaf0"></div>
<div class="abs" style="top:603.24px;font-size:12px;line-height:17px;left:25.00px;font-weight:bold;color:#168ac9;letter-spacing:0.2px;white-space:nowrap"><span style="font-size:13px">+</span> See all</div>
<div class="abs" style="top:659.85px;font-size:14px;line-height:20px;left:23.50px;font-weight:bold;color:#111;letter-spacing:0.3px;white-space:nowrap">Comments</div>
<svg class="abs" style="left:499px;top:661px" width="18" height="17" viewBox="0 0 18 17"><g fill="none" stroke="#1c8ccc" stroke-width="1.2"><path d="M1.6 1.6 H16.4 V11.1 H8.4 L5.3 14.5 V11.1 H1.6 Z"/><path d="M9 4 V9 M6.4 6.5 H11.6"/></g></svg>
<div class="abs" style="left:24px;top:687px;width:492px;height:1px;background:#cdd1da"></div>
<div class="abs" style="left:24px;top:706px;width:16px;height:16px;background:#7b70c8;border-radius:50%"></div>
<div class="abs" style="top:709.07px;font-size:7px;line-height:10px;left:-68.00px;width:200px;text-align:center;font-weight:bold;color:#fff;letter-spacing:-0.3px;white-space:nowrap">RW</div>
<div class="abs" style="top:704.70px;font-size:13px;line-height:18px;left:48.40px;color:#1a1a1a;white-space:nowrap">Adam Accountant</div>
<div class="abs" style="top:705.54px;font-size:12px;line-height:17px;right:24.00px;color:#6b6b6b;letter-spacing:0.1px;white-space:nowrap">January 25, 2023 @ 11:04 AM</div>
<div class="abs" style="top:728.15px;font-size:14px;line-height:20px;left:47.50px;color:#1a1a1a;letter-spacing:0.4px;white-space:nowrap">Ut enim ad minim veniam, quis nostrud exercitation ullamco laboris.</div>
<div class="abs" style="left:24px;top:763px;width:492px;height:1px;background:#e6eaf0"></div>
<div class="abs" style="left:24px;top:782px;width:16px;height:16px;background:#7b70c8;border-radius:50%"></div>
<div class="abs" style="top:785.07px;font-size:7px;line-height:10px;left:-68.00px;width:200px;text-align:center;font-weight:bold;color:#fff;letter-spacing:-0.3px;white-space:nowrap">RW</div>
<div class="abs" style="top:780.70px;font-size:13px;line-height:18px;left:48.40px;color:#1a1a1a;white-space:nowrap">Adam Accountant</div>
<div class="abs" style="top:781.54px;font-size:12px;line-height:17px;right:24.00px;color:#6b6b6b;letter-spacing:0.1px;white-space:nowrap">January 25, 2023 @ 11:04 AM</div>
<div class="abs" style="top:804.15px;font-size:14px;line-height:20px;left:47.50px;color:#1a1a1a;letter-spacing:0.4px;white-space:nowrap">Excepteur sint occaecat cupidatat non proident.</div>
<div class="abs" style="left:24px;top:839px;width:492px;height:1px;background:#e6eaf0"></div>
<div class="abs" style="top:846.84px;font-size:12px;line-height:17px;left:25.00px;font-weight:bold;color:#168ac9;letter-spacing:0.2px;white-space:nowrap"><span style="font-size:13px">+</span> See all</div><!--/PANEL-->
</div>
</body></html>
